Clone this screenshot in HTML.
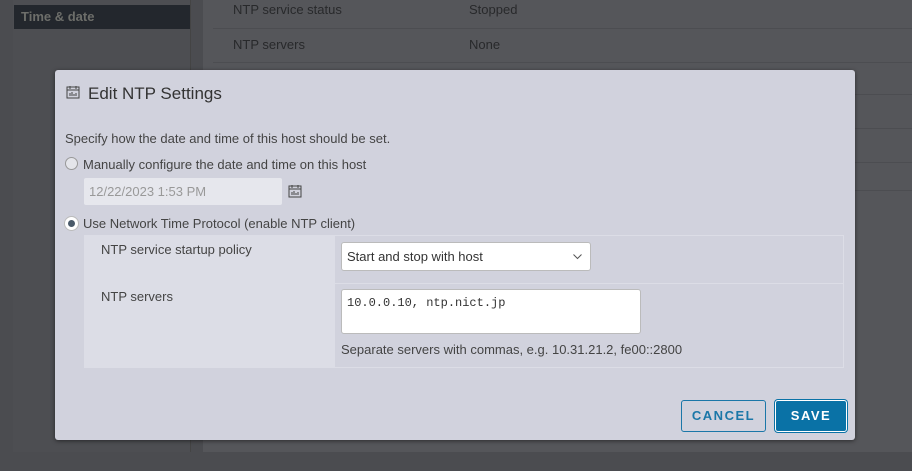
<!DOCTYPE html>
<html><head><meta charset="utf-8"><style>
*{box-sizing:border-box;margin:0;padding:0}
body{width:912px;height:471px;overflow:hidden;background:#4b4c50;font-family:"Liberation Sans",sans-serif;position:relative;color:#333}
.side{position:absolute;left:13px;top:0;width:178px;height:452px;background:#4d4e52;border-right:1px solid #444}
.sel{position:absolute;left:14px;top:5px;width:176px;height:24px;background:#23272d;color:#6d6e6a;font-weight:bold;font-size:13px;padding:4px 0 0 7px}
.main{position:absolute;left:203px;top:0;width:709px;height:452px;background:#55565a}
.row{position:absolute;left:10px;right:0;height:33px;border-bottom:1px solid #4c4d51;font-size:13px;color:#28292b}
.dlg{position:absolute;left:55px;top:70px;width:800px;height:370px;background:#d1d2dd;border-radius:3px;box-shadow:0 1px 4px rgba(0,0,0,.5)}
.t{position:absolute;font-size:13px;color:#444}
.radio{position:absolute;width:13px;height:13px;border-radius:50%;border:1px solid #999;background:#e4e5ea}
.tbl{position:absolute;left:29px;top:165px;width:760px;height:133px;border:1px solid #dcdde6}
.btn{position:absolute;top:330px;height:32px;border-radius:3px;font-size:13px;font-weight:bold;letter-spacing:1.5px;text-align:center;line-height:30px}
</style></head><body>
<div class="side"></div>
<div class="sel">Time &amp; date</div>
<div class="main">
 <div class="row" style="top:-4px"><span style="position:absolute;left:20px;top:6px">NTP service status</span><span style="position:absolute;left:256px;top:6px">Stopped</span></div>
 <div class="row" style="top:29px;height:34px"><span style="position:absolute;left:20px;top:8px">NTP servers</span><span style="position:absolute;left:256px;top:8px">None</span></div>
 <div class="row" style="top:63px;height:32px"></div><div class="row" style="top:95px;height:34px"></div><div class="row" style="top:129px;height:34px"></div><div class="row" style="top:163px;height:28px"></div>
</div>
<div class="dlg">
 <svg style="position:absolute;left:11px;top:15px" width="14" height="14" viewBox="0 0 14 14"><rect x="1" y="2" width="12" height="11" fill="none" stroke="#444"/><line x1="1" y1="5" x2="13" y2="5" stroke="#444"/><path d="M4 1v3M10 1v3M4 11V8M6 11V7M8 11V9M10 11V8" stroke="#444"/></svg>
 <div class="t" style="left:33px;top:14px;font-size:17px;color:#333">Edit NTP Settings</div>
 <div class="t" style="left:10px;top:61px">Specify how the date and time of this host should be set.</div>
 <div class="radio" style="left:10px;top:87px"></div>
 <div class="t" style="left:28px;top:87px">Manually configure the date and time on this host</div>
 <div style="position:absolute;left:29px;top:108px;width:198px;height:27px;background:#e6e7ed;border-radius:2px;color:#999;font-size:13px;padding:6px 0 0 5px">12/22/2023 1:53 PM</div>
 <svg style="position:absolute;left:233px;top:114px" width="14" height="14" viewBox="0 0 14 14"><rect x="1" y="2" width="12" height="11" fill="none" stroke="#444"/><line x1="1" y1="5" x2="13" y2="5" stroke="#444"/><path d="M4 1v3M10 1v3M4 11V8M6 11V7M8 11V9M10 11V8" stroke="#444"/></svg>
 <div class="radio" style="left:10px;top:147px;border:3px solid #fff;background:#4a5a6a;box-shadow:0 0 0 1px #bbb"></div>
 <div class="t" style="left:28px;top:146px">Use Network Time Protocol (enable NTP client)</div>
 <div class="tbl">
  <div style="position:absolute;left:0;top:0;width:250px;height:131px;background:#dcdde6"></div>
  <div style="position:absolute;left:0;right:0;top:47px;border-top:1px solid #dcdde6"></div>
  <div class="t" style="left:16px;top:6px">NTP service startup policy</div>
  <div class="t" style="left:16px;top:53px">NTP servers</div>
  <div style="position:absolute;left:256px;top:6px;width:250px;height:29px;background:#fff;border:1px solid #bbb;border-radius:3px;font-size:13px;padding:6px 0 0 5px;color:#333">Start and stop with host<svg style="position:absolute;right:8px;top:11px" width="9" height="6"><path d="M0.5 0.5L4.5 4.5L8.5 0.5" fill="none" stroke="#555"/></svg></div>
  <div style="position:absolute;left:256px;top:53px;width:300px;height:45px;background:#fff;border:1px solid #bbb;border-radius:3px;font-family:'Liberation Mono',monospace;font-size:12px;padding:6px 0 0 5px;color:#333">10.0.0.10, ntp.nict.jp</div>
  <div class="t" style="left:256px;top:106px">Separate servers with commas, e.g. 10.31.21.2, fe00::2800</div>
 </div>
 <div class="btn" style="left:626px;width:85px;border:1px solid #1b77a8;color:#1b77a8">CANCEL</div>
 <div class="btn" style="left:720px;width:72px;background:#0a72a6;color:#fff;border:1px solid #fff;box-shadow:0 0 0 1px #0a72a6">SAVE</div>
</div>
</body></html>
